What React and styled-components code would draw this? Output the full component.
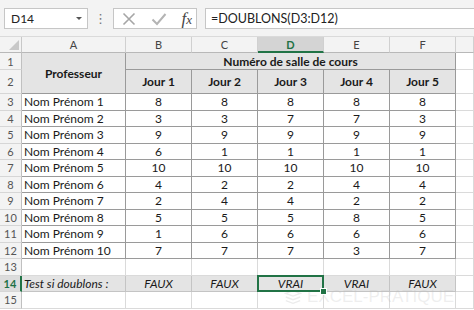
import { createGlobalStyle, styled } from "styled-components";

const GlobalStyle = createGlobalStyle`
  html, body {
    margin: 0;
    padding: 0;
    background: #ffffff;
    overflow: hidden;
  }
`;

const COLS = ["A", "B", "C", "D", "E", "F", ""];

const rows = [
  ["Nom Prénom 1", 8, 8, 8, 8, 8],
  ["Nom Prénom 2", 3, 3, 7, 7, 3],
  ["Nom Prénom 3", 9, 9, 9, 9, 9],
  ["Nom Prénom 4", 6, 1, 1, 1, 1],
  ["Nom Prénom 5", 10, 10, 10, 10, 10],
  ["Nom Prénom 6", 4, 2, 2, 4, 4],
  ["Nom Prénom 7", 2, 4, 4, 2, 2],
  ["Nom Prénom 8", 5, 5, 5, 8, 5],
  ["Nom Prénom 9", 1, 6, 6, 6, 6],
  ["Nom Prénom 10", 7, 7, 7, 3, 7],
];

const results = ["FAUX", "FAUX", "VRAI", "VRAI", "FAUX"];

const App = () => {
  return (
    <Wrapper>
      <GlobalStyle />
      <TopBar>
        <NameBox>
          <span>D14</span>
          <Caret />
        </NameBox>
        <Dots>⋮</Dots>
        <FxButtons>
          <svg width="14" height="14" viewBox="0 0 14 14">
            <path d="M1.5 1.5 L12.5 12.5 M12.5 1.5 L1.5 12.5" stroke="#a6a6a6" strokeWidth="1.6" fill="none" />
          </svg>
          <svg width="16" height="14" viewBox="0 0 16 14">
            <path d="M1.5 7.5 L6 12 L14.5 2" stroke="#b4b4b4" strokeWidth="2" fill="none" />
          </svg>
          <FxLabel>
            f<small>x</small>
          </FxLabel>
        </FxButtons>
        <FormulaInput>=DOUBLONS(D3:D12)</FormulaInput>
      </TopBar>

      <Sheet>
        <Corner>
          <svg width="10" height="10" viewBox="0 0 10 10">
            <path d="M10 0 L10 10 L0 10 Z" fill="#c8c8c8" />
          </svg>
        </Corner>
        {COLS.map((c, i) => (
          <ColHead key={i} $active={c === "D"}>
            {c}
          </ColHead>
        ))}

        <RowHead>1</RowHead>
        <Cell $kind="head" $bold $rowSpan={2}>Professeur</Cell>
        <Cell $kind="head" $bold $colSpan={5}>Numéro de salle de cours</Cell>
        <Cell />

        <RowHead>2</RowHead>
        {[1, 2, 3, 4, 5].map((j) => (
          <Cell key={j} $kind="head" $bold>
            Jour {j}
          </Cell>
        ))}
        <Cell />

        {rows.map((r, i) => (
          <Row key={i} num={i + 3} values={r} />
        ))}

        <RowHead>13</RowHead>
        {COLS.map((c, i) => (
          <Cell key={i} />
        ))}

        <RowHead $active>14</RowHead>
        <Cell $kind="total" $italic $align="left">Test si doublons :</Cell>
        {results.map((v, i) => (
          <Cell key={i} $kind="total" $italic $selected={i === 2}>
            {v}
          </Cell>
        ))}
        <Cell />

        <RowHead>15</RowHead>
        {COLS.map((c, i) => (
          <Cell key={i} />
        ))}

        <Watermark>
          <svg width="18" height="16" viewBox="0 0 20 16">
            <path d="M2 4 L10 1 L18 4 L10 7 Z M2 8 L10 11 L18 8 M2 12 L10 15 L18 12" stroke="#ececec" strokeWidth="1.5" fill="none" />
          </svg>
          <span>EXCEL-PRATIQUE</span>
        </Watermark>
      </Sheet>
    </Wrapper>
  );
};

const Row = ({ num, values }) => (
  <>
    <RowHead>{num}</RowHead>
    {values.map((v, i) => (
      <Cell key={i} $kind="data" $align={i === 0 ? "left" : "center"}>
        {v}
      </Cell>
    ))}
    <Cell />
  </>
);

const Wrapper = styled.div`
  width: 474px;
  height: 310px;
  overflow: hidden;
  background: #ffffff;
  font-family: Lato, "Open Sans", sans-serif;
`;

const TopBar = styled.div`
  height: 37px;
  box-sizing: border-box;
  padding: 8px 0 0 4px;
  background: #f3f3f3;
  display: flex;
  align-items: flex-start;
  border-bottom: 1px solid #dadada;
`;

const NameBox = styled.div`
  width: 84px;
  height: 21px;
  box-sizing: border-box;
  background: #ffffff;
  border: 1px solid #c6c6c6;
  display: flex;
  align-items: center;
  justify-content: space-between;
  padding: 0 5px 0 6px;
  font-size: 12px;
  color: #222;
`;

const Caret = styled.span`
  width: 0;
  height: 0;
  border-left: 3px solid transparent;
  border-right: 3px solid transparent;
  border-top: 3px solid #555;
`;

const Dots = styled.div`
  width: 25px;
  height: 21px;
  display: flex;
  align-items: center;
  justify-content: center;
  color: #777;
  font-size: 13px;
  font-family: "DejaVu Sans", sans-serif;
`;

const FxButtons = styled.div`
  width: 84px;
  height: 21px;
  box-sizing: border-box;
  background: #ffffff;
  border: 1px solid #c6c6c6;
  display: flex;
  align-items: center;
  justify-content: space-between;
  padding: 0 4px 0 8px;
`;

const FxLabel = styled.span`
  font-family: "Liberation Serif", serif;
  font-style: italic;
  font-size: 17px;
  color: #444;
  line-height: 1;

  small {
    font-size: 13px;
  }
`;

const FormulaInput = styled.div`
  flex: 1;
  margin-left: 8px;
  height: 21px;
  box-sizing: border-box;
  background: #ffffff;
  border: 1px solid #c6c6c6;
  border-right: none;
  display: flex;
  align-items: center;
  padding-left: 5px;
  font-size: 12.5px;
  color: #222;
`;

const Sheet = styled.div`
  position: relative;
  display: grid;
  grid-template-columns: 22px 104px repeat(5, 66px) 1fr;
  grid-template-rows: 16px 17px 24px repeat(13, 16.5px);
  font-size: 12px;
  color: #1a1a1a;
`;

const Corner = styled.div`
  background: #f3f3f3;
  border-right: 1px solid #c8c8c8;
  border-bottom: 1px solid #b8b8b8;
  display: flex;
  align-items: flex-end;
  justify-content: flex-end;
  padding: 0 2px 2px 0;
`;

const ColHead = styled.div`
  background: ${(p) => (p.$active ? "#d4d4d4" : "#f3f3f3")};
  color: ${(p) => (p.$active ? "#1e7145" : "#444")};
  font-weight: ${(p) => (p.$active ? 700 : 400)};
  border-right: 1px solid #d0d0d0;
  border-bottom: ${(p) => (p.$active ? "2px solid #217346" : "1px solid #b8b8b8")};
  font-size: 11px;
  display: flex;
  align-items: center;
  justify-content: center;
`;

const RowHead = styled.div`
  background: ${(p) => (p.$active ? "#dcdcdc" : "#f3f3f3")};
  color: ${(p) => (p.$active ? "#1e7145" : "#555")};
  font-weight: ${(p) => (p.$active ? 700 : 400)};
  border-right: ${(p) => (p.$active ? "2px solid #217346" : "1px solid #c0c0c0")};
  border-bottom: 1px solid #d6d6d6;
  font-size: 11px;
  display: flex;
  align-items: center;
  justify-content: center;
`;

const kinds = {
  plain: { bg: "#ffffff", line: "#dadada" },
  head: { bg: "#e4e4e4", line: "#9a9a9a" },
  data: { bg: "#ffffff", line: "#9a9a9a" },
  total: { bg: "#e4e4e4", line: "#c4c4c4" },
};

const Cell = styled.div`
  position: relative;
  grid-column: span ${(p) => p.$colSpan || 1};
  grid-row: span ${(p) => p.$rowSpan || 1};
  background: ${(p) => kinds[p.$kind || "plain"].bg};
  border-right: 1px solid ${(p) => kinds[p.$kind || "plain"].line};
  border-bottom: 1px solid ${(p) => kinds[p.$kind || "plain"].line};
  font-weight: ${(p) => (p.$bold ? 700 : 400)};
  font-style: ${(p) => (p.$italic ? "italic" : "normal")};
  display: flex;
  align-items: center;
  justify-content: ${(p) => (p.$align === "left" ? "flex-start" : "center")};
  padding-left: ${(p) => (p.$align === "left" ? "2px" : "0")};
  white-space: nowrap;
  overflow: hidden;

  ${(p) =>
    p.$selected &&
    `
    overflow: visible;
    z-index: 2;
    &::before {
      content: "";
      position: absolute;
      left: -1px;
      top: -1px;
      right: -1px;
      bottom: -1px;
      border: 2px solid #217346;
    }
    &::after {
      content: "";
      position: absolute;
      right: -4px;
      bottom: -4px;
      width: 5px;
      height: 5px;
      background: #217346;
      border: 1px solid #ffffff;
    }
  `}
`;

const Watermark = styled.div`
  position: absolute;
  left: 284px;
  bottom: 2px;
  height: 20px;
  display: flex;
  align-items: center;
  gap: 5px;
  white-space: nowrap;
  font-family: "Liberation Sans", sans-serif;
  font-size: 17px;
  color: rgba(190, 190, 190, 0.25);
  pointer-events: none;
  z-index: 1;
`;

export default App;
